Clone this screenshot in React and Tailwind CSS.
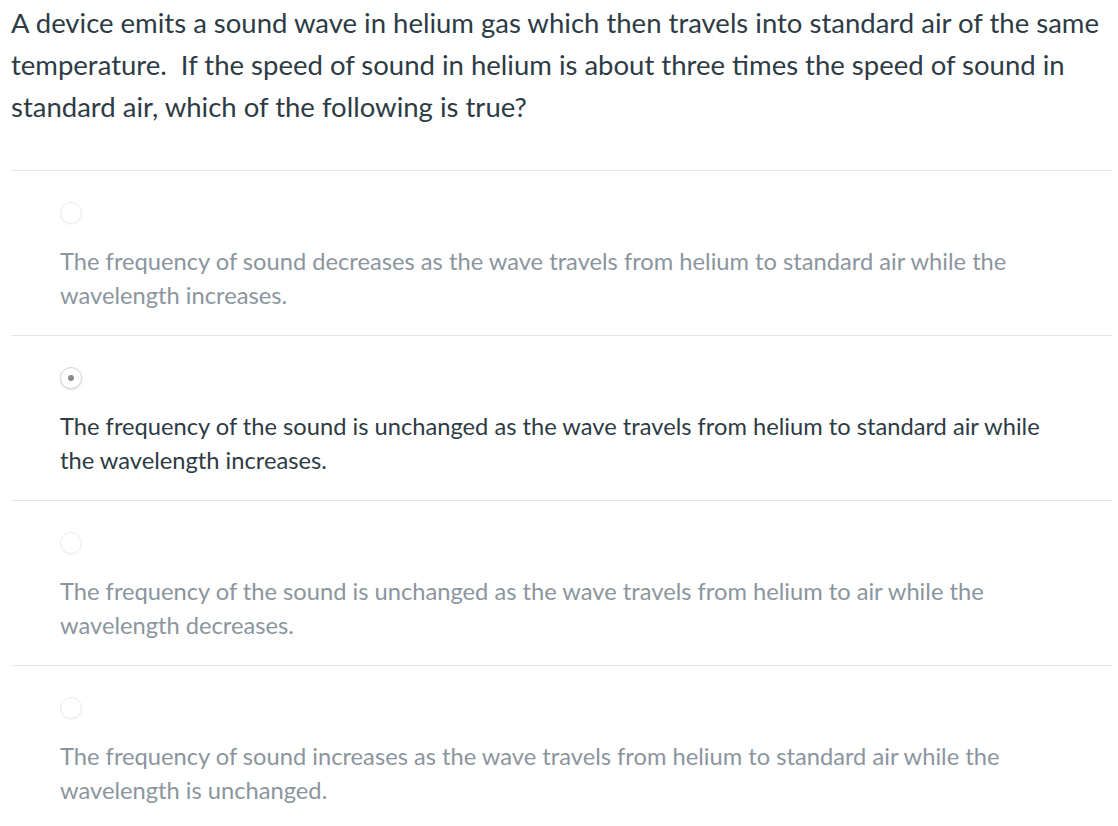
const options = [
  {
    text: "The frequency of sound decreases as the wave travels from helium to standard air while the wavelength increases.",
    selected: false,
  },
  {
    text: "The frequency of the sound is unchanged as the wave travels from helium to standard air while the wavelength increases.",
    selected: true,
  },
  {
    text: "The frequency of the sound is unchanged as the wave travels from helium to air while the wavelength decreases.",
    selected: false,
  },
  {
    text: "The frequency of sound increases as the wave travels from helium to standard air while the wavelength is unchanged.",
    selected: false,
  },
];

function Radio({ selected }) {
  return (
    <div
      className={
        "w-[22px] h-[22px] rounded-full bg-white flex items-center justify-center border " +
        (selected
          ? "border-[#d6d6d6] shadow-[0_1px_2px_rgba(0,0,0,0.12)]"
          : "border-[#ececec] shadow-[0_1px_1px_rgba(0,0,0,0.04)]")
      }
    >
      {selected && <div className="w-[6px] h-[6px] rounded-full bg-[#8a8a8a]" />}
    </div>
  );
}

export default function App() {
  return (
    <div
      className="bg-white min-h-screen w-[1118px] pl-[11px] pr-[6px] pt-[2px]"
      style={{ fontFamily: "Lato, 'Noto Sans', sans-serif" }}
    >
      <p className="text-[27.5px] leading-[42px] text-[#2d3b45] pb-[42px]">
        A device emits a sound wave in helium gas which then travels into standard air of the same
        temperature.&nbsp; If the speed of sound in helium is about three times the speed of sound in
        standard air, which of the following is true?
      </p>
      <div>
        {options.map((o, i) => (
          <div key={i} className="border-t border-[#e6e6e6] pl-[49px] pr-[50px] pt-[31px] pb-[23px]">
            <Radio selected={o.selected} />
            <p
              className={
                "mt-[20px] text-[23.7px] leading-[34px] " +
                (o.selected ? "text-[#2d3b45]" : "text-[#8b959e]")
              }
            >
              {o.text}
            </p>
          </div>
        ))}
      </div>
    </div>
  );
}
